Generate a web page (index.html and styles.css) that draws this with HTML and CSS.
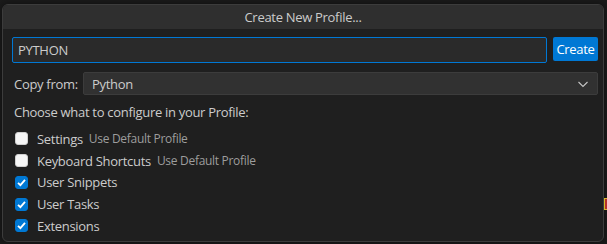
FILE: index.html
```html
<!DOCTYPE html>
<html lang="en">
<head>
    <meta charset="UTF-8">
    <meta name="viewport" content="width=device-width, initial-scale=1.0">
    <title>Create New Profile</title>
    <link rel="stylesheet" href="styles.css">
</head>
<body>

    <div class="dialog">
        <div class="dialog-title">Create New Profile...</div>

        <div class="dialog-body">
            <!-- Profile name -->
            <div class="name-row">
                <input type="text" class="name-input" value="PYTHON">
                <button type="button" class="btn">Create</button>
            </div>

            <!-- Copy from -->
            <div class="copy-row">
                <span class="copy-label">Copy from:</span>
                <div class="select">
                    <span>Python</span>
                    <svg class="chevron" width="16" height="16" viewBox="0 0 16 16">
                        <path d="M3.5 6 L8 10.5 L12.5 6" fill="none" stroke="#c5c5c5" stroke-width="1.1"/>
                    </svg>
                </div>
            </div>

            <div class="heading">Choose what to configure in your Profile:</div>

            <ul class="options">
                <li><span class="box"></span>Settings <span class="desc">Use Default Profile</span></li>
                <li><span class="box"></span>Keyboard Shortcuts <span class="desc">Use Default Profile</span></li>
                <li><span class="box checked"><svg width="13" height="13" viewBox="0 0 13 13"><path d="M3 6.8 L5.4 9.2 L10 3.8" fill="none" stroke="#fff" stroke-width="1.8"/></svg></span>User Snippets</li>
                <li><span class="box checked"><svg width="13" height="13" viewBox="0 0 13 13"><path d="M3 6.8 L5.4 9.2 L10 3.8" fill="none" stroke="#fff" stroke-width="1.8"/></svg></span>User Tasks</li>
                <li><span class="box checked"><svg width="13" height="13" viewBox="0 0 13 13"><path d="M3 6.8 L5.4 9.2 L10 3.8" fill="none" stroke="#fff" stroke-width="1.8"/></svg></span>Extensions</li>
            </ul>
        </div>
    </div>

    <!-- bit of editor content peeking out on the right -->
    <div class="peek"></div>

</body>
</html>
```

FILE: styles.css
```css
/* Global styles */
body, html {
    margin: 0;
    padding: 0;
    height: 100%;
    font-family: "Open Sans", "Noto Sans", sans-serif;
    font-size: 13px;
    letter-spacing: -0.3px;
    color: #cccccc;
    background-color: #1b1b1b;
}

body {
    position: relative;
    overflow: hidden;
    padding-top: 4px;
    box-sizing: border-box;
}

/* Dialog */
.dialog {
    margin-left: 2px;
    width: 602px;
    height: 238px;
    box-sizing: border-box;
    border: 1px solid #3c3c3c;
    border-radius: 6px;
    background-color: #1f1f1f;
    overflow: hidden;
    box-shadow: 0 0 8px rgba(0, 0, 0, 0.5);
}

.dialog-title {
    height: 24px;
    line-height: 24px;
    text-align: center;
    background-color: #2f2f2f;
    color: #cccccc;
}

.dialog-body {
    padding: 8px 5px 0 9px;
}

/* Name row */
.name-row {
    display: flex;
    align-items: flex-start;
    gap: 6px;
}

.name-input {
    flex: 1;
    height: 26px;
    box-sizing: border-box;
    border: 1px solid #0078d4;
    border-radius: 2px;
    background-color: #2a2a2a;
    color: #cccccc;
    font-family: inherit;
    font-size: 13px;
    letter-spacing: -0.3px;
    padding: 0 5px;
    outline: none;
}

.btn {
    width: 45px;
    height: 24px;
    border: none;
    border-radius: 2px;
    background-color: #0078d4;
    color: #ffffff;
    font-family: inherit;
    font-size: 13px;
    letter-spacing: -0.3px;
    padding: 0;
}

/* Copy from row */
.copy-row {
    display: flex;
    align-items: center;
    margin-top: 9px;
    padding-left: 2px;
}

.copy-label {
    width: 69px;
}

.select {
    flex: 1;
    height: 23px;
    box-sizing: border-box;
    display: flex;
    align-items: center;
    justify-content: space-between;
    padding: 0 6px 0 8px;
    border: 1px solid #3c3c3c;
    border-radius: 2px;
    background-color: #313131;
}

.chevron {
    display: block;
}

.heading {
    margin-top: 6px;
    line-height: 22px;
    padding-left: 2px;
}

/* Option list */
.options {
    list-style: none;
    margin: 5px 0 0 0;
    padding: 0 0 0 3px;
}

.options li {
    display: flex;
    align-items: center;
    height: 21.75px;
}

.box {
    width: 13px;
    height: 13px;
    box-sizing: border-box;
    border-radius: 3px;
    background-color: #f6f6f6;
    border: 1px solid #d0d0d0;
    margin-right: 9px;
    flex-shrink: 0;
}

.box.checked {
    background-color: #0078d4;
    border-color: #0078d4;
}

.box svg {
    display: block;
    margin: -1px;
}

.desc {
    margin-left: 6px;
    font-size: 12px;
    color: #9d9d9d;
}

/* Fragment behind the dialog */
.peek {
    position: absolute;
    left: 604px;
    top: 198px;
    width: 3px;
    height: 12px;
    box-sizing: border-box;
    border: 1px solid #d7ba2d;
    border-right: none;
    background-color: #b5302a;
}
```
